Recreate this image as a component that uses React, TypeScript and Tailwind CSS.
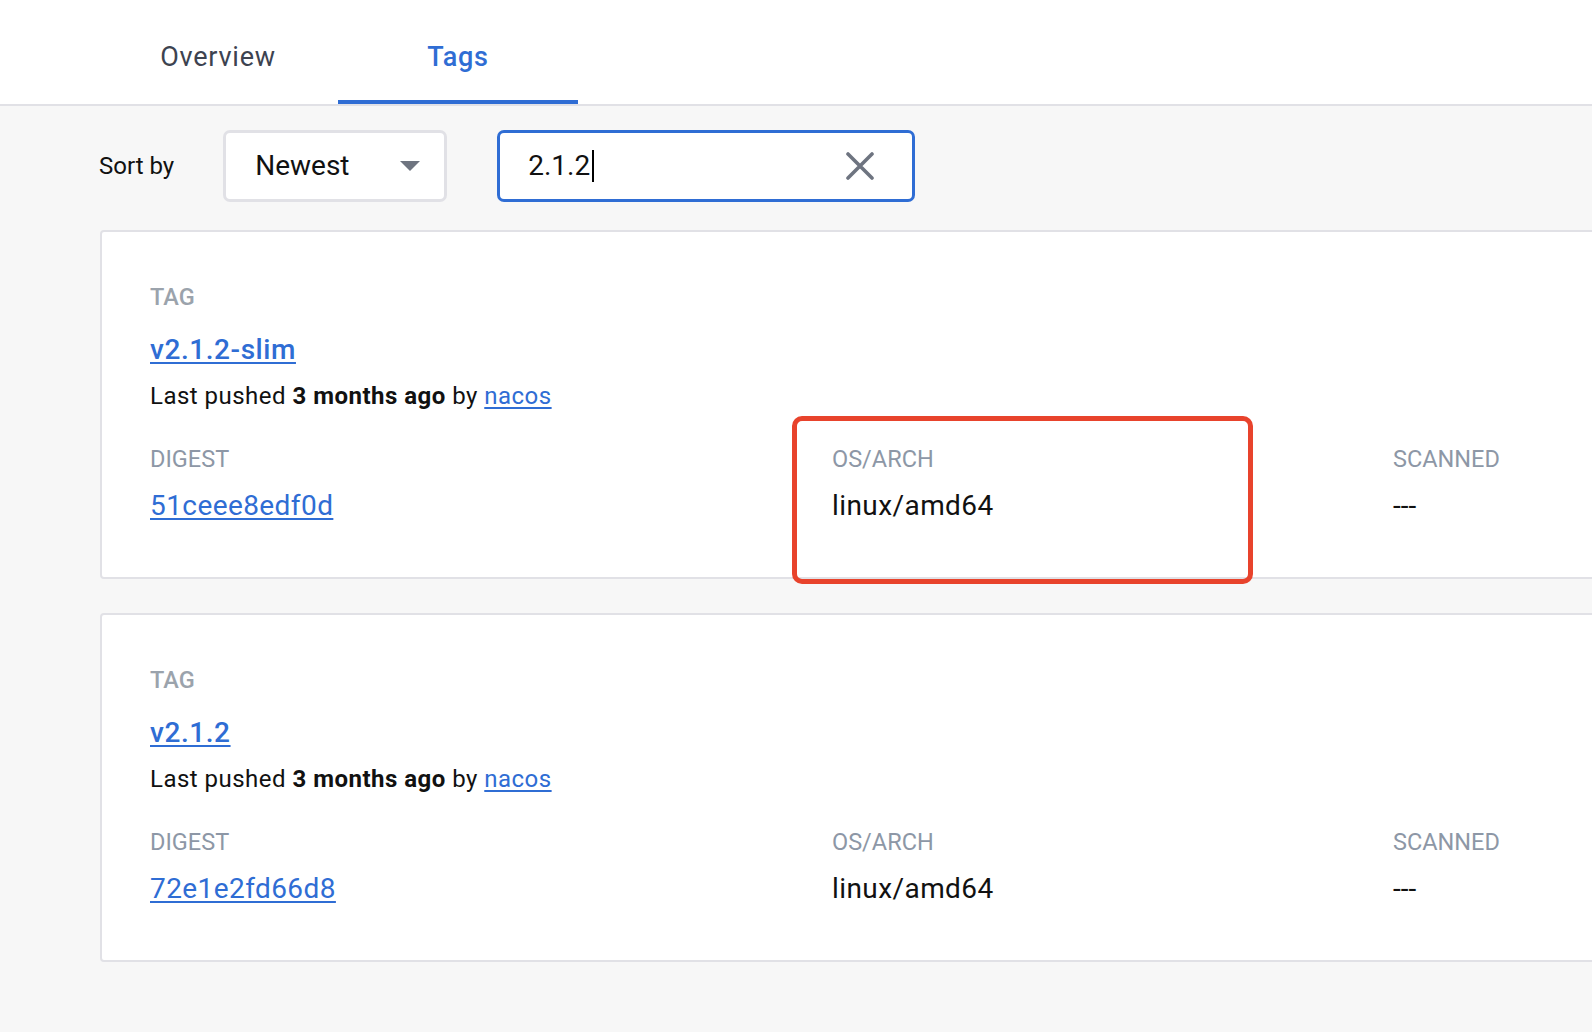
const font = { fontFamily: 'Roboto, "Noto Sans", sans-serif' };

type Tag = {
  name: string;
  digest: string;
  os: string;
  highlight?: boolean;
};

const tags: Tag[] = [
  { name: 'v2.1.2-slim', digest: '51ceee8edf0d', os: 'linux/amd64', highlight: true },
  { name: 'v2.1.2', digest: '72e1e2fd66d8', os: 'linux/amd64' },
];

function Label({ children }: { children: React.ReactNode }) {
  return <div className="text-[23.5px] leading-[24px] text-[#8d97a6]">{children}</div>;
}

function TagCard({ tag }: { tag: Tag }) {
  return (
    <div className="relative w-[1540px] rounded-[4px] border-2 border-[#e1e1e6] bg-white pl-12 pt-[53px] pb-[54px]">
      <div className="text-[23.5px] font-medium leading-[24px] text-[#9ba3ac]">TAG</div>
      <a className="mt-[24px] block text-[28px] font-medium leading-[34px] tracking-[0.02em] text-[#2f6dd4] underline decoration-2 underline-offset-[3px]">
        {tag.name}
      </a>
      <div className="mt-[14px] text-[24px] leading-[30px] tracking-[0.02em] text-[#111]">
        Last pushed <span className="font-bold">3 months ago</span> by{' '}
        <a className="text-[#2f6dd4] underline underline-offset-[3px]">nacos</a>
      </div>

      <div className="mt-[36px] flex">
        <div className="w-[682px]">
          <Label>DIGEST</Label>
          <a className="mt-[18px] block text-[28px] leading-[34px] tracking-[0.015em] text-[#2f6dd4] underline underline-offset-[3px]">
            {tag.digest}
          </a>
        </div>
        <div className="w-[561px]">
          <Label>OS/ARCH</Label>
          <div className="mt-[18px] text-[28px] leading-[34px] tracking-[0.015em] text-[#111]">{tag.os}</div>
        </div>
        <div>
          <Label>SCANNED</Label>
          <div className="mt-[18px] text-[28px] leading-[34px] text-[#111]">---</div>
        </div>
      </div>

      {tag.highlight && (
        <div className="pointer-events-none absolute left-[690px] top-[184px] h-[168px] w-[461px] rounded-[10px] border-[5px] border-[#e8432c]" />
      )}
    </div>
  );
}

export default function App() {
  return (
    <div className="h-[1032px] w-[1592px] overflow-hidden bg-[#f7f7f7]" style={font}>
      {/* Tabs */}
      <div className="flex h-[106px] border-b-2 border-[#e1e1e6] bg-white pl-[98px]">
        <div className="flex h-[104px] w-[240px] items-start justify-center pt-[39px] text-[27px] leading-[36px] tracking-[0.02857em] text-[#3d4350]">
          Overview
        </div>
        <div className="flex h-[104px] w-[240px] items-start justify-center border-b-4 border-[#2f6dd4] pt-[39px] text-[27px] font-medium leading-[36px] tracking-[0.02857em] text-[#2f6dd4]">
          Tags
        </div>
      </div>

      {/* Toolbar */}
      <div className="flex items-center pl-[99px] pt-[24px]">
        <span className="text-[24px] leading-[30px] text-[#111]">Sort by</span>
        <div className="ml-[49px] flex h-[72px] w-[224px] items-center justify-between rounded-[7px] border-[3px] border-[#e1e1e6] bg-white pl-[29px] pr-[24px]">
          <span className="text-[28px] leading-[34px] text-[#111]">Newest</span>
          <svg width="20" height="10" viewBox="0 0 20 10">
            <path d="M0 0h20L10 10z" fill="#6e7480" />
          </svg>
        </div>
        <div className="ml-[50px] flex h-[72px] w-[418px] items-center justify-between rounded-[7px] border-[3px] border-[#2f6dd4] bg-white pl-[28px] pr-[38px]">
          <span className="flex items-center text-[28px] leading-[34px] text-[#111]">
            2.1.2
            <span className="ml-[2px] inline-block h-[32px] w-[2px] bg-black" />
          </span>
          <svg width="28" height="28" viewBox="0 0 28 28">
            <path d="M2 2L26 26M26 2L2 26" stroke="#6e7480" strokeWidth="3.6" strokeLinecap="round" />
          </svg>
        </div>
      </div>

      {/* Tag list */}
      <div className="flex flex-col gap-[34px] pl-[100px] pt-[28px]">
        {tags.map((tag) => (
          <TagCard key={tag.name} tag={tag} />
        ))}
      </div>
    </div>
  );
}
